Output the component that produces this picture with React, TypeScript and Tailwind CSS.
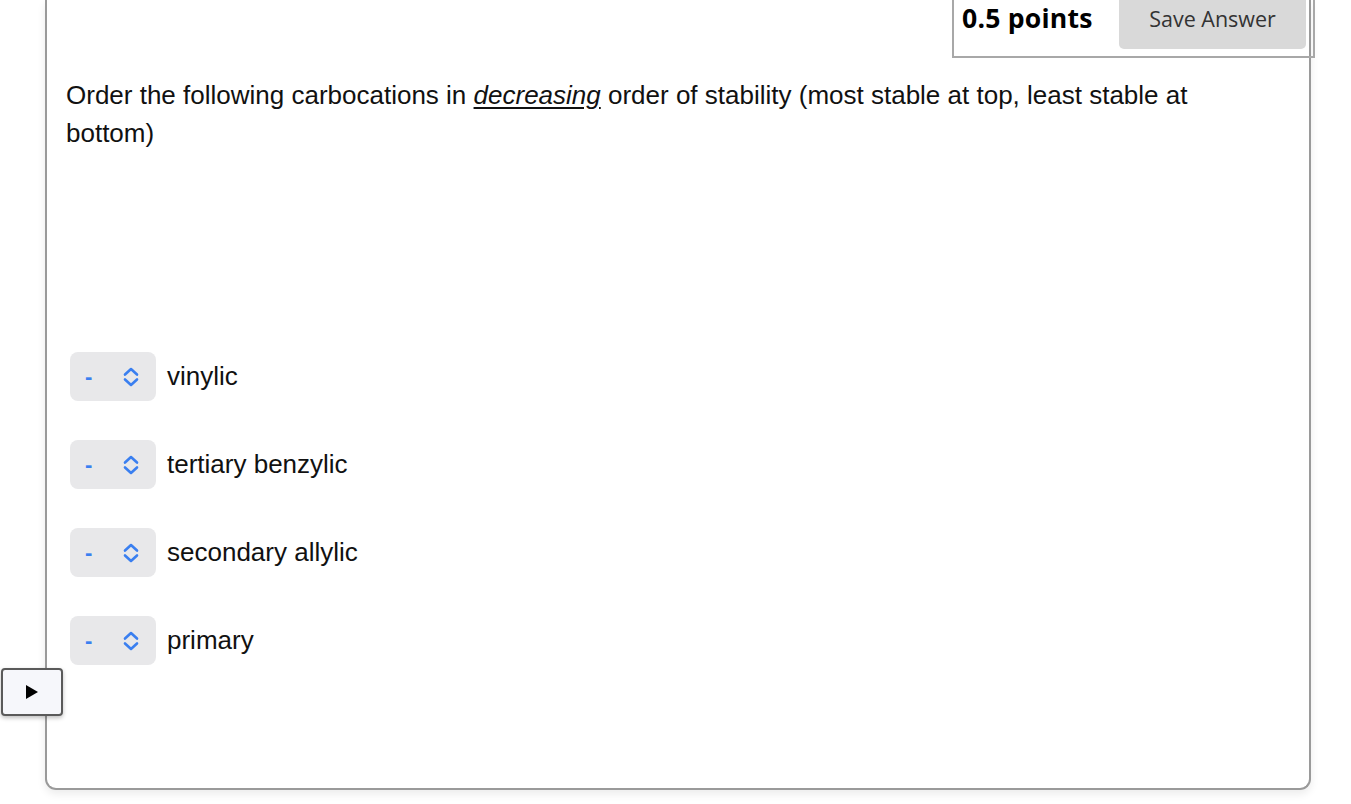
import React from "react";

const items = ["vinylic", "tertiary benzylic", "secondary allylic", "primary"];

function Chevron() {
  return (
    <svg width="18" height="22" viewBox="0 0 18 22" fill="none">
      <path d="M3 8.5 L9 3 L15 8.5" stroke="#3a7ff0" strokeWidth="2.6" strokeLinecap="round" strokeLinejoin="round" />
      <path d="M3 13.5 L9 19 L15 13.5" stroke="#3a7ff0" strokeWidth="2.6" strokeLinecap="round" strokeLinejoin="round" />
    </svg>
  );
}

export default function App() {
  return (
    <div className="relative w-[1351px] h-[804px] bg-white overflow-hidden" style={{ fontFamily: '"Liberation Sans", Arial, sans-serif' }}>
      <div className="ml-[45px] w-[1266px] h-[790px] border-x-2 border-b-2 border-[#9a9a9a] rounded-b-[11px] shadow-[0_4px_8px_rgba(0,0,0,0.08)] flex flex-col">
        <div className="flex justify-end -mr-[6px]">
          <div className="flex items-start border-x-2 border-b-2 border-[#a8a8a8] pl-[8px] pr-[7px] pb-[7px] w-[363px]" style={{ fontFamily: '"Open Sans", sans-serif' }}>
            <div className="text-[26.6px] font-bold text-black leading-[36px] h-[36px] tracking-[0.2px]">0.5 points</div>
            <div className="ml-auto w-[187px] h-[49px] bg-[#d9d9d9] rounded-b-[5px] flex items-center justify-center text-[21.5px] text-[#333] pb-[11px] pt-[0px]">
              Save Answer
            </div>
          </div>
        </div>
        <div className="pl-[19px] pr-[60px] mt-[18px] text-[26px] leading-[38px] text-[#111]">
          Order the following carbocations in <span className="italic underline underline-offset-[3px]">decreasing</span> order of stability (most stable at top, least stable at bottom)
        </div>
        <div className="mt-[200px] pl-[23px] flex flex-col gap-[39px]">
          {items.map((t) => (
            <div key={t} className="flex items-center h-[49px]">
              <div className="w-[86px] h-[49px] bg-[#e8e8ea] rounded-[8px] flex items-center pl-[15px]">
                <span className="text-[#3a7ff0] text-[22px] font-bold w-[37px]">-</span>
                <Chevron />
              </div>
              <span className="ml-[11px] text-[26px] text-[#111]">{t}</span>
            </div>
          ))}
        </div>
      </div>
      <div className="absolute left-[1px] top-[668px] w-[62px] h-[48px] bg-[#f6f7fb] border-2 border-[#5a5a5a] rounded-[4px] shadow-[0_2px_4px_rgba(0,0,0,0.25)] flex items-center justify-center">
        <svg width="14" height="14" viewBox="0 0 14 14"><path d="M1 0 L13 7 L1 14 Z" fill="#000" /></svg>
      </div>
    </div>
  );
}
